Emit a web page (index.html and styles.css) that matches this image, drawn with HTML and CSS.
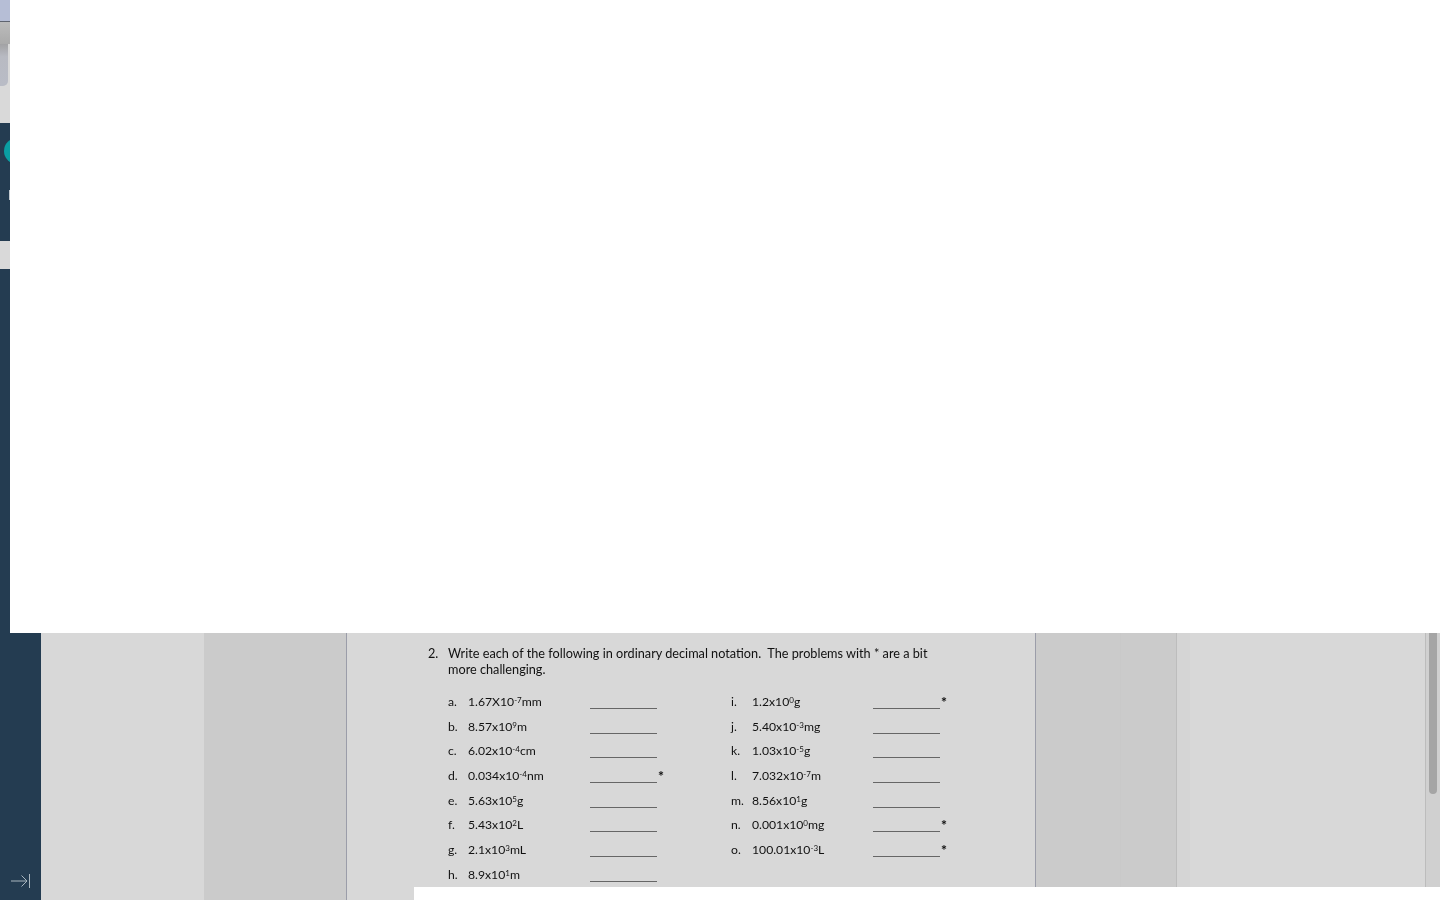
FILE: index.html
```html
<!DOCTYPE html>
<html lang="en">
<head>
<meta charset="utf-8">
<title>Worksheet</title>
<link rel="stylesheet" href="styles.css">
</head>
<body>
<div class="app">
  <header class="chrome">
    <div class="titlebar"></div>
    <div class="toolbar"></div>
    <div class="tabs"><div class="tab"></div></div>
  </header>
  <nav class="nav">
    <div class="avatar"></div>
    <div class="nav-tick"></div>
  </nav>
  <div class="band"></div>
  <div class="workspace">
    <aside class="rail">
      <svg class="expand" width="20" height="16" viewBox="0 0 20 16" aria-hidden="true">
        <path d="M0 8H16M10.500 2.500L16 8L10.500 13.500M18.500 1V15" fill="none" stroke="#a9b6bf" stroke-width="1"/>
      </svg>
    </aside>
    <div class="gutter"></div>
    <div class="margin margin-left"></div>
    <main class="doc">
      <div class="lead-line"></div>
      <div class="question">
        <span class="num">2.</span>
        <p class="prompt">Write each of the following in ordinary decimal notation.&nbsp; The problems with * are a bit more challenging.</p>
      </div>
      <div class="answers">
        <ol class="col col-a">
          <li class="item"><span>a.</span><span>1.67X10<sup>-7</sup>mm</span><i class="blank"></i></li>
          <li class="item"><span>b.</span><span>8.57x10<sup>9</sup>m</span><i class="blank"></i></li>
          <li class="item"><span>c.</span><span>6.02x10<sup>-4</sup>cm</span><i class="blank"></i></li>
          <li class="item"><span>d.</span><span>0.034x10<sup>-4</sup>nm</span><i class="blank"></i><b class="star">*</b></li>
          <li class="item"><span>e.</span><span>5.63x10<sup>5</sup>g</span><i class="blank"></i></li>
          <li class="item"><span>f.</span><span>5.43x10<sup>2</sup>L</span><i class="blank"></i></li>
          <li class="item"><span>g.</span><span>2.1x10<sup>3</sup>mL</span><i class="blank"></i></li>
          <li class="item"><span>h.</span><span>8.9x10<sup>1</sup>m</span><i class="blank"></i></li>
        </ol>
        <ol class="col col-b">
          <li class="item"><span>i.</span><span>1.2x10<sup>0</sup>g</span><i class="blank"></i><b class="star">*</b></li>
          <li class="item"><span>j.</span><span>5.40x10<sup>-3</sup>mg</span><i class="blank"></i></li>
          <li class="item"><span>k.</span><span>1.03x10<sup>-5</sup>g</span><i class="blank"></i></li>
          <li class="item"><span>l.</span><span>7.032x10<sup>-7</sup>m</span><i class="blank"></i></li>
          <li class="item"><span>m.</span><span>8.56x10<sup>1</sup>g</span><i class="blank"></i></li>
          <li class="item"><span>n.</span><span>0.001x10<sup>0</sup>mg</span><i class="blank"></i><b class="star">*</b></li>
          <li class="item"><span>o.</span><span>100.01x10<sup>-3</sup>L</span><i class="blank"></i><b class="star">*</b></li>
        </ol>
      </div>
    </main>
    <div class="margin margin-right"></div>
    <div class="spacer"></div>
    <div class="scroll"><div class="thumb"></div></div>
  </div>
  <div class="cover-top"></div>
  <div class="cover-bottom"></div>
</div>
</body>
</html>
```

FILE: styles.css
```css
* { box-sizing: border-box; }
html, body { margin: 0; height: 100%; }
body { background: #d8d8d8; font-family: Lato, "Liberation Sans", sans-serif; overflow: hidden; }

.app { position: relative; width: 1440px; height: 900px; display: flex; flex-direction: column; overflow: hidden; }

.chrome { height: 123px; flex: none; display: flex; flex-direction: column; }
.titlebar { height: 22px; background: #b6bed6; border-bottom: 1px solid #5f6470; }
.toolbar { height: 22px; background: linear-gradient(#bcbcbc, #aaaaaa); }
.tabs { flex: 1; background: #d9d9d9; }
.tab { width: 8px; height: 42px; background: linear-gradient(#a2a2a4, #b8bac2 30%, #b9bcc6); border-bottom-right-radius: 5px; }

.nav { height: 118px; flex: none; background: #243c51; padding: 15px 0 0 4px; }
.avatar { width: 26px; height: 26px; border-radius: 50%; background: #0a9ea3; }
.nav-tick { width: 1px; height: 10px; margin: 26px 0 0 5px; background: #c3cad0; }

.band { height: 28px; flex: none; background: #d9d9d9; }

.workspace { flex: 1; min-height: 0; display: flex; }
.rail { width: 41px; flex: none; background: #243c51; display: flex; flex-direction: column; justify-content: flex-end; align-items: flex-start; padding: 0 0 11px 11px; }
.expand { display: block; }
.gutter { width: 163px; flex: none; background: #d8d8d8; }
.margin { width: 142px; flex: none; background: #cbcbcb; }
.margin-left { border-right: 1px solid #9b9da9; width: 143px; }
.margin-right { border-left: 1px solid #9b9da9; border-right: 1px solid #bdbdbd; width: 142px; background: linear-gradient(90deg, #cbcbcb 84px, #c9c9c9 84px, #c9c9c9 85px, #cbcbcb 85px); }

.doc { width: 688px; flex: none; background: #d8d8d8; padding: 363px 0 0 81px; color: #111; font-size: 12.2px; filter: blur(0.35px); }
.lead-line { width: 67px; height: 1px; margin-left: 162px; background: #6e6e6e; }

.question { display: flex; margin-top: 12px; height: 49px; font-size: 12.7px; }
.num { width: 20px; flex: none; line-height: 16px; }
.prompt { margin: 0; width: 482px; line-height: 16px; }

.answers { display: flex; }
.col { list-style: none; margin: 0; padding: 0; }
.col-a { width: 303px; padding-left: 20px; }
.col-b { padding-left: 0; }

.item { display: grid; height: 24.7px; grid-template-columns: 20px 122px 67px 8px; line-height: 16px; position: relative; }
.col-b .item { grid-template-columns: 21px 121px 67px 8px; }
sup { font-size: 8px; line-height: 0; vertical-align: 3px; }
.blank { display: block; height: 1px; margin-top: 14px; background: #666; }
.star { font-weight: 900; font-size: 14px; line-height: 14px; margin: 1px 0 0 1px; }

.spacer { flex: 1; background: linear-gradient(90deg, #d5d5d5 13px, #d8d8d8 13px); }
.scroll { width: 15px; flex: none; background: #d0d0d0; border-left: 1px solid #bcbcbc; padding-left: 3px; }
.thumb { width: 8px; height: 525px; background: #a5a5a5; border-radius: 0 0 4px 4px; }

.cover-top { position: absolute; left: 10px; top: 0; width: 1430px; height: 633px; background: #fff; }
.cover-bottom { position: absolute; left: 414px; top: 887px; width: 1026px; height: 13px; background: #fff; }
```
